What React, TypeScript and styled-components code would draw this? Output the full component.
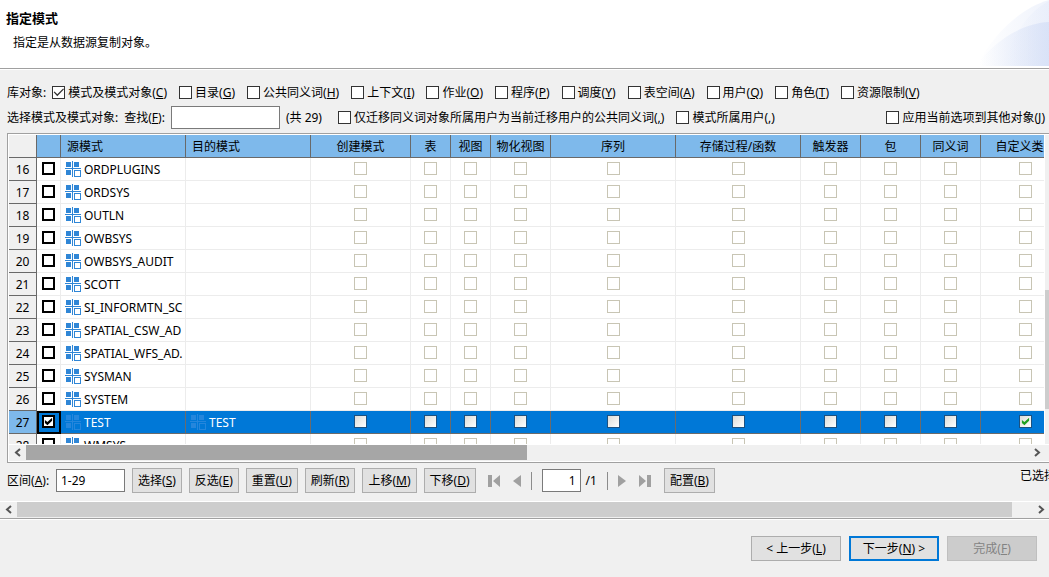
import React from 'react';
import styled, { createGlobalStyle, css } from 'styled-components';

const GlobalStyle = createGlobalStyle`
  *, *::before, *::after { box-sizing: border-box; }
  body {
    margin: 0;
    background: #f0f0f0;
    color: #000;
    font: 12px/16px "Noto Sans", "Noto Sans CJK SC", sans-serif;
  }
  button, input { font: inherit; color: inherit; margin: 0; }
  h1, p { margin: 0; }
`;

const Page = styled.div`
  display: flex;
  flex-direction: column;
  height: 100vh;
  overflow: hidden;
`;

const Banner = styled.header`
  display: flex;
  flex: none;
  justify-content: space-between;
  height: 69px;
  background: #fff;
  border-bottom: 1px solid #a0a0a0;
`;

const BannerText = styled.div`
  display: flex;
  flex-direction: column;
  gap: 9px;
  padding: 10px 6px;
`;

const Title = styled.h1`
  font-size: 13px;
  line-height: 16px;
  font-weight: 700;
`;

const Description = styled.p`
  padding-left: 7px;
`;

const Workspace = styled.main`
  display: flex;
  flex: 1;
  flex-direction: column;
  min-height: 0;
  overflow: hidden;
  border-top: 1px solid #fff;
`;

const Content = styled.div`
  display: flex;
  flex: 1;
  flex-direction: column;
  width: calc(100% + 22px);
  min-height: 0;
  padding: 12px 7px 8px;
`;

const OptionRow = styled.div`
  display: flex;
  flex: none;
  align-items: center;
  height: 21px;
  gap: 12px;
  white-space: nowrap;
`;

const FilterRow = styled(OptionRow)`
  height: 23px;
  margin: 3px 19px 4px 0;
`;

const Group = styled.div<{ $gap: number }>`
  display: flex;
  align-items: center;
  gap: ${(p) => p.$gap}px;
`;

const SearchGroup = styled(Group)`
  padding-right: 4px;
`;

const PushedRight = styled.div`
  margin-left: auto;
`;

const CheckLabel = styled.label`
  display: flex;
  align-items: center;
  gap: 3px;
`;

type BoxKind = 'form' | 'bold' | 'dim' | 'lit';

const boxKinds = {
  form: css`border: 1px solid #333; background: #fff;`,
  bold: css`border: 2px solid #000; background: #fff;`,
  dim: css`border: 1px solid #c8c5b4; background: #fff;`,
  lit: css`border: 1px solid #1c5180; background: linear-gradient(135deg, #dcdcd7, #fff);`,
};

const Box = styled.input.attrs({ type: 'checkbox' })<{ $kind: BoxKind }>`
  appearance: none;
  display: grid;
  flex: none;
  width: 13px;
  height: 13px;
  place-content: center;
  ${(p) => boxKinds[p.$kind]}

  &:checked::after {
    content: "";
    width: ${(p) => (p.$kind === 'form' ? 11 : 9)}px;
    height: 9px;
    background: ${(p) => (p.$kind === 'lit' ? '#21a121' : p.$kind === 'form' ? '#333' : '#000')};
    clip-path: ${(p) =>
      p.$kind === 'form'
        ? 'polygon(4% 46%, 12% 38%, 37% 70%, 90% 6%, 98% 14%, 37% 92%)'
        : 'polygon(10% 32%, 38% 56%, 90% 8%, 90% 42%, 38% 92%, 10% 66%)'};
  }
`;

const TextBox = styled.input<{ $width: number; $align?: 'right' }>`
  width: ${(p) => p.$width}px;
  height: 23px;
  padding: 0 4px;
  border: 1px solid #7a7a7a;
  background: #fff;
  text-align: ${(p) => p.$align ?? 'left'};
`;

const GridPanel = styled.section`
  display: flex;
  flex: 1;
  flex-direction: column;
  min-height: 0;
  padding: 1px;
  border: 1px solid #a0a0a0;
  background: #fff;
`;

const GridBody = styled.div`
  display: flex;
  flex: 1;
  min-height: 0;
`;

const GridViewport = styled.div`
  flex: 1;
  min-width: 0;
  overflow: hidden;
  border-right: 1px solid #fff;
`;

const Table = styled.table`
  width: 1062px;
  table-layout: fixed;
  border-collapse: separate;
  border-spacing: 0;
`;

const HeadCell = styled.th<{ $start?: boolean; $blank?: boolean }>`
  height: 23px;
  padding: 2px 0 0 ${(p) => (p.$start ? 6 : 0)}px;
  overflow: hidden;
  border-right: 1px solid #696969;
  border-bottom: 1px solid #696969;
  background: ${(p) => (p.$blank ? '#f0f0f0' : '#7eb9eb')};
  font-weight: 400;
  line-height: 16px;
  text-align: ${(p) => (p.$start ? 'left' : 'center')};
  white-space: nowrap;
`;

const Row = styled.tr<{ $selected: boolean }>`
  background: ${(p) => (p.$selected ? '#0078d7' : '#fff')};
  color: ${(p) => (p.$selected ? '#fff' : '#000')};
  --line: ${(p) => (p.$selected ? '#6b6b6b' : '#ececec')};
`;

const RowNumber = styled.th<{ $selected: boolean }>`
  height: 23px;
  padding: 2px 0 0;
  border-right: 1px solid #696969;
  border-bottom: 1px solid #696969;
  background: ${(p) => (p.$selected ? '#7eb9eb' : '#f0f0f0')};
  color: #000;
  font-weight: 400;
`;

const Cell = styled.td`
  height: 23px;
  padding: 0;
  overflow: hidden;
  border-right: 1px solid var(--line);
  border-bottom: 1px solid var(--line);
`;

const PickCell = styled(Cell)<{ $focused: boolean }>`
  ${(p) => p.$focused && css`
    border-color: #000;
    box-shadow: inset 2px 2px #000, inset -1px -1px #000;
  `}
`;

const Centered = styled.div`
  display: flex;
  justify-content: center;
  padding-bottom: 1px;
`;

const SchemaName = styled.div`
  display: flex;
  align-items: center;
  gap: 3px;
  padding-left: 4px;
  white-space: nowrap;
`;

const SchemaText = styled.span`
  padding-top: 2px;
`;

const SchemaSvg = styled.svg<{ $faded: boolean }>`
  flex: none;
  fill: ${(p) => (p.$faded ? '#2586dc' : '#2f86d6')};
`;

const VTrack = styled.div`
  display: flex;
  flex: none;
  flex-direction: column;
  width: 17px;
  background: #f0f0f0;
`;

const Part = styled.div<{ $grow: number; $color?: string }>`
  flex: ${(p) => p.$grow} 0 0;
  background: ${(p) => p.$color ?? 'transparent'};
`;

const HBar = styled.div<{ $end: number }>`
  display: flex;
  flex: none;
  height: 17px;
  padding-right: ${(p) => p.$end}px;
  border-top: 1px solid #fff;
  border-bottom: 1px solid #f0f0f0;
  background: #f0f0f0;
`;

const ArrowButton = styled.button`
  display: grid;
  width: 17px;
  padding: 0;
  border: 0;
  place-content: center;
  background: transparent;
`;

const Toolbar = styled.div`
  display: flex;
  flex: none;
  align-items: center;
  gap: 7px;
  padding-top: 5px;
  white-space: nowrap;
`;

const RangeLabel = styled.label`
  width: 41px;
`;

const PushButton = styled.button<{ $wide?: boolean; $primary?: boolean }>`
  min-width: ${(p) => (p.$wide ? 90 : 0)}px;
  height: 25px;
  padding: 0 5px;
  border: ${(p) => (p.$primary ? '2px solid #0078d7' : '1px solid #adadad')};
  background: #e1e1e1;
  line-height: 16px;
  white-space: nowrap;

  &:disabled {
    border-color: #bfbfbf;
    background: #ccc;
    color: #838383;
  }
`;

const Pager = styled.nav`
  display: flex;
  align-items: center;
  gap: 10px;
  padding: 0 6px 0 5px;
`;

const PageButton = styled.button`
  display: grid;
  padding: 0;
  border: 0;
  background: transparent;
`;

const Divider = styled.span`
  width: 1px;
  height: 18px;
  background: #8c8c8c;
`;

const Status = styled.span`
  align-self: flex-start;
  width: 44px;
  margin-left: auto;
`;

const Footer = styled.footer`
  display: flex;
  flex: none;
  justify-content: flex-end;
  gap: 8px;
  padding: 17px 12px 16px;
  border-top: 1px solid #a0a0a0;
  box-shadow: inset 0 1px #fff;
`;

const Mnemonic = ({ text, k, tail = '' }: { text: string; k: string; tail?: string }) => (
  <span>{text}(<u>{k}</u>){tail}</span>
);

const Check = ({ text, k, checked }: { text: string; k: string; checked?: boolean }) => (
  <CheckLabel>
    <Box $kind="form" defaultChecked={checked} />
    <Mnemonic text={text} k={k} />
  </CheckLabel>
);

const SchemaIcon = ({ faded }: { faded: boolean }) => (
  <SchemaSvg $faded={faded} width="16" height="16" shapeRendering="crispEdges" aria-hidden>
    <path d="M1 1h5v5H1zM9 1h5v5H9zM1 9h5v5H1zM7 0h1v16H7zM0 7h16v1H0z" />
    <path fillRule="evenodd" d="M9 9h7v7H9zM10 10v5h5v-5z" />
  </SchemaSvg>
);

const Arrow = ({ back }: { back?: boolean }) => (
  <ArrowButton aria-label={back ? '向左滚动' : '向右滚动'}>
    <svg width="8" height="9" fill="none" stroke="#555" strokeWidth="2">
      <path d={back ? 'M6 1L2 4.500L6 8' : 'M2 1L6 4.500L2 8'} />
    </svg>
  </ArrowButton>
);

const pageIcons = {
  首页: { w: 12, d: 'M0 0h4v12H0zM12 0v12L5 6z' },
  上一页: { w: 8, d: 'M8 0v12L0 6z' },
  下一页: { w: 8, d: 'M0 0v12L8 6z' },
  末页: { w: 12, d: 'M8 0h4v12H8zM0 0v12L7 6z' },
};

const PageNav = ({ name }: { name: keyof typeof pageIcons }) => (
  <PageButton aria-label={name}>
    <svg width={pageIcons[name].w} height="12" fill="#a0a0a0">
      <path d={pageIcons[name].d} />
    </svg>
  </PageButton>
);

const Swoosh = () => (
  <svg width="76" height="66" aria-hidden>
    <defs>
      <linearGradient id="swoosh" x1="0" x2="1">
        <stop offset="0.050" stopColor="#c9d6f4" stopOpacity="0" />
        <stop offset="1" stopColor="#c9d6f4" stopOpacity="0.500" />
      </linearGradient>
    </defs>
    <g fill="url(#swoosh)">
      <path d="M3 66C22 32 48 8 76 0V66z" opacity="0.600" />
      <path d="M32 66C36 40 54 12 76 1V66z" opacity="0.300" />
      <path d="M3 66C22 40 50 23 76 22V66z" />
    </g>
  </svg>
);

const objectKinds: [string, string][] = [
  ['模式及模式对象', 'C'], ['目录', 'G'], ['公共同义词', 'H'], ['上下文', 'I'],
  ['作业', 'O'], ['程序', 'P'], ['调度', 'Y'], ['表空间', 'A'],
  ['用户', 'Q'], ['角色', 'T'], ['资源限制', 'V'],
];

const widths = [28, 24, 125, 125, 100, 40, 40, 60, 125, 125, 60, 60, 60, 90];

const flagColumns = [
  '创建模式', '表', '视图', '物化视图', '序列', '存储过程/函数', '触发器', '包', '同义词', '自定义类型',
];

const schemas = [
  'ORDPLUGINS', 'ORDSYS', 'OUTLN', 'OWBSYS', 'OWBSYS_AUDIT', 'SCOTT', 'SI_INFORMTN_SC',
  'SPATIAL_CSW_AD', 'SPATIAL_WFS_AD.', 'SYSMAN', 'SYSTEM', 'TEST', 'WMSYS',
];

const actions: [string, string][] = [
  ['选择', 'S'], ['反选', 'E'], ['重置', 'U'], ['刷新', 'R'], ['上移', 'M'], ['下移', 'D'],
];

const SchemaLabel = ({ name, faded }: { name: string; faded: boolean }) => (
  <SchemaName>
    <SchemaIcon faded={faded} />
    <SchemaText>{name}</SchemaText>
  </SchemaName>
);

const SchemaTable = () => (
  <Table>
    <colgroup>
      {widths.map((w, i) => <col key={i} width={w} />)}
    </colgroup>
    <thead>
      <tr>
        <HeadCell $blank />
        <HeadCell />
        <HeadCell $start>源模式</HeadCell>
        <HeadCell $start>目的模式</HeadCell>
        {flagColumns.map((c) => <HeadCell key={c}>{c}</HeadCell>)}
      </tr>
    </thead>
    <tbody>
      {schemas.map((name, i) => {
        const selected = name === 'TEST';
        return (
          <Row key={name} $selected={selected}>
            <RowNumber $selected={selected}>{i + 16}</RowNumber>
            <PickCell $focused={selected}>
              <Centered><Box $kind="bold" defaultChecked={selected} aria-label={name} /></Centered>
            </PickCell>
            <Cell><SchemaLabel name={name} faded={selected} /></Cell>
            <Cell>{selected && <SchemaLabel name={name} faded />}</Cell>
            {flagColumns.map((c) => (
              <Cell key={c}>
                <Centered>
                  <Box
                    $kind={selected ? 'lit' : 'dim'}
                    disabled={!selected}
                    defaultChecked={selected && c === '自定义类型'}
                    aria-label={`${name} ${c}`}
                  />
                </Centered>
              </Cell>
            ))}
          </Row>
        );
      })}
    </tbody>
  </Table>
);

export default function App() {
  return (
    <Page>
      <GlobalStyle />
      <Banner>
        <BannerText>
          <Title>指定模式</Title>
          <Description>指定是从数据源复制对象。</Description>
        </BannerText>
        <Swoosh />
      </Banner>
      <Workspace>
        <Content>
          <OptionRow>
            <Group $gap={6}>
              <span>库对象:</span>
              <Check text="模式及模式对象" k="C" checked />
            </Group>
            {objectKinds.slice(1).map(([text, k]) => <Check key={k} text={text} k={k} />)}
          </OptionRow>
          <FilterRow>
            <SearchGroup $gap={6}>
              <span>选择模式及模式对象:</span>
              <label htmlFor="find"><Mnemonic text="查找" k="F" tail=":" /></label>
              <TextBox id="find" $width={109} />
              <span>(共 29)</span>
            </SearchGroup>
            <Check text="仅迁移同义词对象所属用户为当前迁移用户的公共同义词" k="," />
            <Check text="模式所属用户" k="," />
            <PushedRight><Check text="应用当前选项到其他对象" k="J" /></PushedRight>
          </FilterRow>
          <GridPanel>
            <GridBody>
              <GridViewport><SchemaTable /></GridViewport>
              <VTrack>
                <Part $grow={155} />
                <Part $grow={119} $color="#cdcdcd" />
                <Part $grow={35} />
              </VTrack>
            </GridBody>
            <HBar $end={17}>
              <Arrow back />
              <Part $grow={501} $color="#a6a6a6" />
              <Part $grow={501} />
              <Arrow />
            </HBar>
          </GridPanel>
          <Toolbar>
            <Group $gap={8}>
              <RangeLabel htmlFor="range"><Mnemonic text="区间" k="A" tail=":" /></RangeLabel>
              <TextBox id="range" $width={69} defaultValue="1-29" />
            </Group>
            {actions.map(([text, k]) => (
              <PushButton key={k}><Mnemonic text={text} k={k} /></PushButton>
            ))}
            <Pager>
              <Group $gap={13}>
                <PageNav name="首页" />
                <PageNav name="上一页" />
              </Group>
              <Divider />
              <Group $gap={5}>
                <TextBox $width={39} $align="right" defaultValue="1" aria-label="页码" />
                <span>/1</span>
              </Group>
              <Divider />
              <Group $gap={13}>
                <PageNav name="下一页" />
                <PageNav name="末页" />
              </Group>
            </Pager>
            <PushButton><Mnemonic text="配置" k="B" /></PushButton>
            <Status>已选择</Status>
          </Toolbar>
        </Content>
        <HBar $end={0}>
          <Arrow back />
          <Part $grow={995} $color="#cdcdcd" />
          <Part $grow={20} />
          <Arrow />
        </HBar>
      </Workspace>
      <Footer>
        <PushButton $wide><Mnemonic text="&lt; 上一步" k="L" /></PushButton>
        <PushButton $wide $primary><Mnemonic text="下一步" k="N" tail=" &gt;" /></PushButton>
        <PushButton $wide disabled><Mnemonic text="完成" k="F" /></PushButton>
      </Footer>
    </Page>
  );
}
